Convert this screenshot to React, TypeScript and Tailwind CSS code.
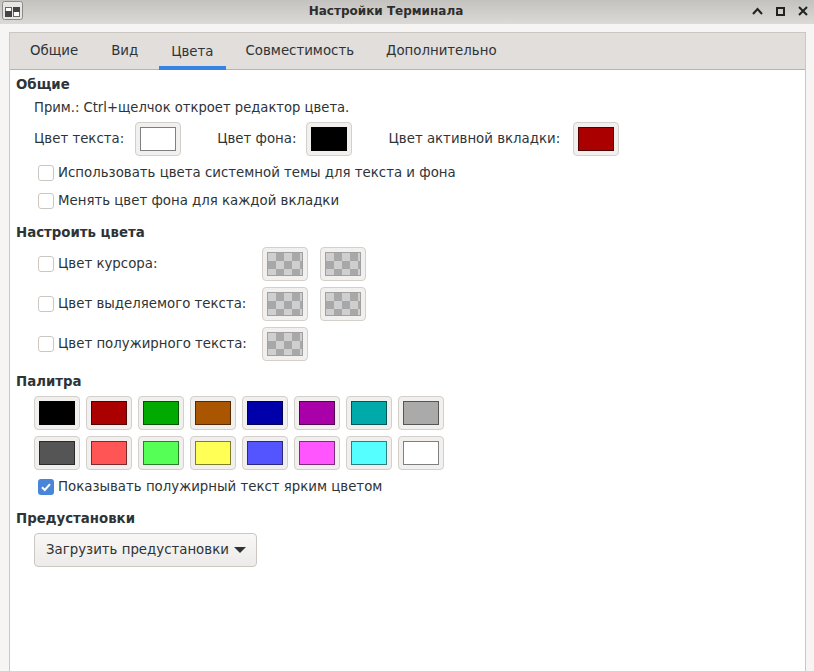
import React from 'react';

const palette = [
  ['#000000', '#aa0000', '#00aa00', '#aa5500', '#0000aa', '#aa00aa', '#00aaaa', '#aaaaaa'],
  ['#555555', '#ff5555', '#55ff55', '#ffff55', '#5555ff', '#ff55ff', '#55ffff', '#ffffff'],
];

function Heading({ children }: { children: React.ReactNode }) {
  return <h2 className="h-5 pl-4 text-[13.33px] leading-5 font-bold text-[#2e3436]">{children}</h2>;
}

function ColorButton({ color }: { color?: string }) {
  return (
    <button className="flex h-[34px] w-[46px] shrink-0 items-center justify-center rounded-[4px] border border-[#d3cfca] bg-[#f2f0ee]">
      {color ? (
        <span className="h-6 w-9 border border-black/50" style={{ backgroundColor: color }} />
      ) : (
        <span className="h-6 w-9 border border-[#a0a0a0] bg-[conic-gradient(#a8a8a8_25%,#cfcfcf_0_50%,#a8a8a8_0_75%,#cfcfcf_0)] bg-size-[16px_16px]" />
      )}
    </button>
  );
}

function Check({ label, checked }: { label: string; checked?: boolean }) {
  return (
    <label className="flex h-5 items-center gap-1">
      {checked ? (
        <span className="flex h-4 w-4 items-center justify-center rounded-[3px] bg-[#4a86d8]">
          <svg width="12" height="12" viewBox="0 0 12 12" fill="none">
            <path d="M2 6.2 L4.8 9 L10 3.2" stroke="#fff" strokeWidth="2" />
          </svg>
        </span>
      ) : (
        <span className="h-4 w-4 rounded-[3px] border border-[#cdc7c2] bg-white" />
      )}
      <span>{label}</span>
    </label>
  );
}

function CustomRow({ label, count }: { label: string; count: number }) {
  return (
    <div className="flex h-[34px] items-center pl-[38px]">
      <div className="w-[224px]">
        <Check label={label} />
      </div>
      <div className="flex gap-3">
        {Array.from({ length: count }).map((_, i) => (
          <ColorButton key={i} />
        ))}
      </div>
    </div>
  );
}

export default function App() {
  return (
    <div className="flex h-[671px] w-[814px] flex-col overflow-hidden bg-[#f6f5f4] font-['DejaVu_Sans',sans-serif] text-[13.33px] text-[#2e3436]">
      <div className="flex h-6 shrink-0 items-center justify-between bg-gradient-to-b from-[#c4c2bf] to-[#dcdad7] pl-0.5 pr-1.5">
        <svg width="21" height="20" viewBox="0 0 21 20" className="mb-0.5">
          <rect x="0.5" y="0.5" width="20" height="18" rx="2" fill="#e8e6e3" stroke="#8d8b88" />
          <rect x="3.5" y="6.5" width="6" height="9" fill="#fff" stroke="#666" />
          <rect x="3" y="10" width="7" height="6" fill="#444" />
          <rect x="11.5" y="6.5" width="6" height="9" fill="#fff" stroke="#666" />
          <rect x="11" y="6" width="7" height="5" fill="#444" />
        </svg>
        <span className="mb-0.5 mr-[3px] text-[12px] font-bold text-[#2e2e2e]">Настройки Терминала</span>
        <div className="mb-0.5 flex items-center gap-[13px]">
          <svg width="11" height="8" viewBox="0 0 11 8" fill="none">
            <path d="M1 7 L5.5 2 L10 7" stroke="#222" strokeWidth="2" />
          </svg>
          <svg width="9" height="9" viewBox="0 0 9 9" fill="none">
            <rect x="1" y="1" width="7" height="7" stroke="#222" strokeWidth="2" />
          </svg>
          <svg width="10" height="10" viewBox="0 0 10 10" fill="none">
            <path d="M1 1 L9 9 M9 1 L1 9" stroke="#222" strokeWidth="2" />
          </svg>
        </div>
      </div>

      <div className="ml-[9px] mr-2 mt-2 flex min-h-0 flex-1 flex-col border-x border-t border-[#cdc7c2] bg-white">
        <div className="flex h-[37px] shrink-0 border-b border-[#b6b2ad] bg-[#e1dedb] pl-1">
          <div className="flex h-[36px] items-center px-4">Общие</div>
          <div className="flex h-[36px] items-center px-[17px]">Вид</div>
          <div className="mx-1 flex h-[37px] items-center border-b-[4px] border-[#3584e4] px-3 pt-[4px]">Цвета</div>
          <div className="flex h-[36px] items-center px-4">Совместимость</div>
          <div className="flex h-[36px] items-center px-4">Дополнительно</div>
        </div>

        <div className="-ml-2.5 flex flex-col pt-[5px]">
          <Heading>Общие</Heading>
          <div className="mt-[3px] h-5 pl-[34px] text-[13.17px] leading-5">Прим.: Ctrl+щелчок откроет редактор цвета.</div>
          <div className="mt-1 flex items-center pl-[34px]">
            <span className="mr-[11px]">Цвет текста:</span>
            <ColorButton color="#ffffff" />
            <span className="ml-9 mr-[9px]">Цвет фона:</span>
            <ColorButton color="#000000" />
            <span className="ml-[37px] mr-[13px]">Цвет активной вкладки:</span>
            <ColorButton color="#aa0000" />
          </div>
          <div className="mt-[7px] flex flex-col gap-2 pl-[38px]">
            <Check label="Использовать цвета системной темы для текста и фона" />
            <Check label="Менять цвет фона для каждой вкладки" />
          </div>

          <div className="mt-3">
            <Heading>Настроить цвета</Heading>
          </div>
          <div className="mt-1 flex flex-col gap-1.5">
            <CustomRow label="Цвет курсора:" count={2} />
            <CustomRow label="Цвет выделяемого текста:" count={2} />
            <CustomRow label="Цвет полужирного текста:" count={1} />
          </div>

          <div className="mt-[11px]">
            <Heading>Палитра</Heading>
          </div>
          <div className="mt-1 flex flex-col gap-1.5 pl-[34px]">
            {palette.map((row, i) => (
              <div key={i} className="flex gap-1.5">
                {row.map((c) => (
                  <ColorButton key={c} color={c} />
                ))}
              </div>
            ))}
          </div>
          <div className="mt-[7px] pl-[38px]">
            <Check label="Показывать полужирный текст ярким цветом" checked />
          </div>

          <div className="mt-3">
            <Heading>Предустановки</Heading>
          </div>
          <div className="mt-1 pl-[34px]">
            <button className="flex h-[34px] items-center gap-1 rounded-[4px] border border-[#cdc7c2] bg-gradient-to-b from-[#f8f7f6] to-[#edebe9] pl-[11px] pr-[9px] text-[#2e3436]">
              Загрузить предустановки
              <svg width="14" height="8" viewBox="0 0 14 8">
                <path d="M1 1 H13 L7 7 Z" fill="#2e3436" />
              </svg>
            </button>
          </div>
        </div>
      </div>
    </div>
  );
}
